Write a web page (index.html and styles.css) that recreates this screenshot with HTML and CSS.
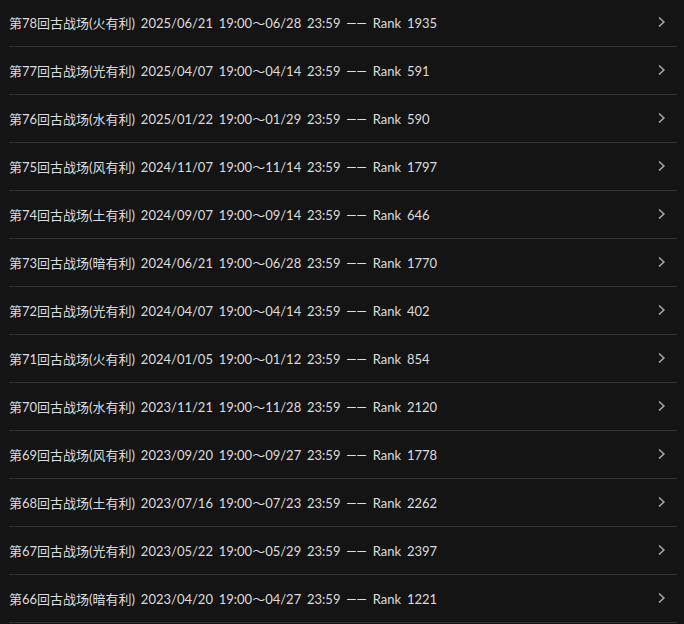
FILE: index.html
```html
<!DOCTYPE html>
<html lang="zh-CN">
<head>
    <meta charset="UTF-8">
    <title>古战场 Rank</title>
    <link rel="stylesheet" href="styles.css">
</head>
<body>

    <!-- Event list -->
    <ul class="event-list">
        <li class="event-item"><span class="event-title">第78回古战场(火有利) 2025/06/21 19:00～06/28 23:59 —— Rank 1935</span><svg class="chevron" width="8" height="12" viewBox="0 0 8 12"><path d="M1 1.5 L6 6 L1 10.5"/></svg></li>
        <li class="event-item"><span class="event-title">第77回古战场(光有利) 2025/04/07 19:00～04/14 23:59 —— Rank 591</span><svg class="chevron" width="8" height="12" viewBox="0 0 8 12"><path d="M1 1.5 L6 6 L1 10.5"/></svg></li>
        <li class="event-item"><span class="event-title">第76回古战场(水有利) 2025/01/22 19:00～01/29 23:59 —— Rank 590</span><svg class="chevron" width="8" height="12" viewBox="0 0 8 12"><path d="M1 1.5 L6 6 L1 10.5"/></svg></li>
        <li class="event-item"><span class="event-title">第75回古战场(风有利) 2024/11/07 19:00～11/14 23:59 —— Rank 1797</span><svg class="chevron" width="8" height="12" viewBox="0 0 8 12"><path d="M1 1.5 L6 6 L1 10.5"/></svg></li>
        <li class="event-item"><span class="event-title">第74回古战场(土有利) 2024/09/07 19:00～09/14 23:59 —— Rank 646</span><svg class="chevron" width="8" height="12" viewBox="0 0 8 12"><path d="M1 1.5 L6 6 L1 10.5"/></svg></li>
        <li class="event-item"><span class="event-title">第73回古战场(暗有利) 2024/06/21 19:00～06/28 23:59 —— Rank 1770</span><svg class="chevron" width="8" height="12" viewBox="0 0 8 12"><path d="M1 1.5 L6 6 L1 10.5"/></svg></li>
        <li class="event-item"><span class="event-title">第72回古战场(光有利) 2024/04/07 19:00～04/14 23:59 —— Rank 402</span><svg class="chevron" width="8" height="12" viewBox="0 0 8 12"><path d="M1 1.5 L6 6 L1 10.5"/></svg></li>
        <li class="event-item"><span class="event-title">第71回古战场(火有利) 2024/01/05 19:00～01/12 23:59 —— Rank 854</span><svg class="chevron" width="8" height="12" viewBox="0 0 8 12"><path d="M1 1.5 L6 6 L1 10.5"/></svg></li>
        <li class="event-item"><span class="event-title">第70回古战场(水有利) 2023/11/21 19:00～11/28 23:59 —— Rank 2120</span><svg class="chevron" width="8" height="12" viewBox="0 0 8 12"><path d="M1 1.5 L6 6 L1 10.5"/></svg></li>
        <li class="event-item"><span class="event-title">第69回古战场(风有利) 2023/09/20 19:00～09/27 23:59 —— Rank 1778</span><svg class="chevron" width="8" height="12" viewBox="0 0 8 12"><path d="M1 1.5 L6 6 L1 10.5"/></svg></li>
        <li class="event-item"><span class="event-title">第68回古战场(土有利) 2023/07/16 19:00～07/23 23:59 —— Rank 2262</span><svg class="chevron" width="8" height="12" viewBox="0 0 8 12"><path d="M1 1.5 L6 6 L1 10.5"/></svg></li>
        <li class="event-item"><span class="event-title">第67回古战场(光有利) 2023/05/22 19:00～05/29 23:59 —— Rank 2397</span><svg class="chevron" width="8" height="12" viewBox="0 0 8 12"><path d="M1 1.5 L6 6 L1 10.5"/></svg></li>
        <li class="event-item"><span class="event-title">第66回古战场(暗有利) 2023/04/20 19:00～04/27 23:59 —— Rank 1221</span><svg class="chevron" width="8" height="12" viewBox="0 0 8 12"><path d="M1 1.5 L6 6 L1 10.5"/></svg></li>
    </ul>

</body>
</html>
```

FILE: styles.css
```css
/* General Reset */
* {
    margin: 0;
    padding: 0;
    box-sizing: border-box;
}

body {
    background: #141414;
    color: #dcdcdc;
    font-family: 'Lato', 'Noto Sans CJK SC', sans-serif;
    overflow: hidden;
}

/* Event list */
.event-list {
    list-style: none;
    margin: -1px 7px 0 9px;
}

.event-item {
    display: flex;
    align-items: center;
    justify-content: space-between;
    height: 48px;
    padding-bottom: 1px;
    border-bottom: 1px solid #333;
    font-size: 13px;
}

.event-title {
    white-space: nowrap;
    word-spacing: 2.5px;
}

.chevron {
    margin-right: 11px;
    fill: none;
    stroke: #b4b4b4;
    stroke-width: 1.4;
}
```
